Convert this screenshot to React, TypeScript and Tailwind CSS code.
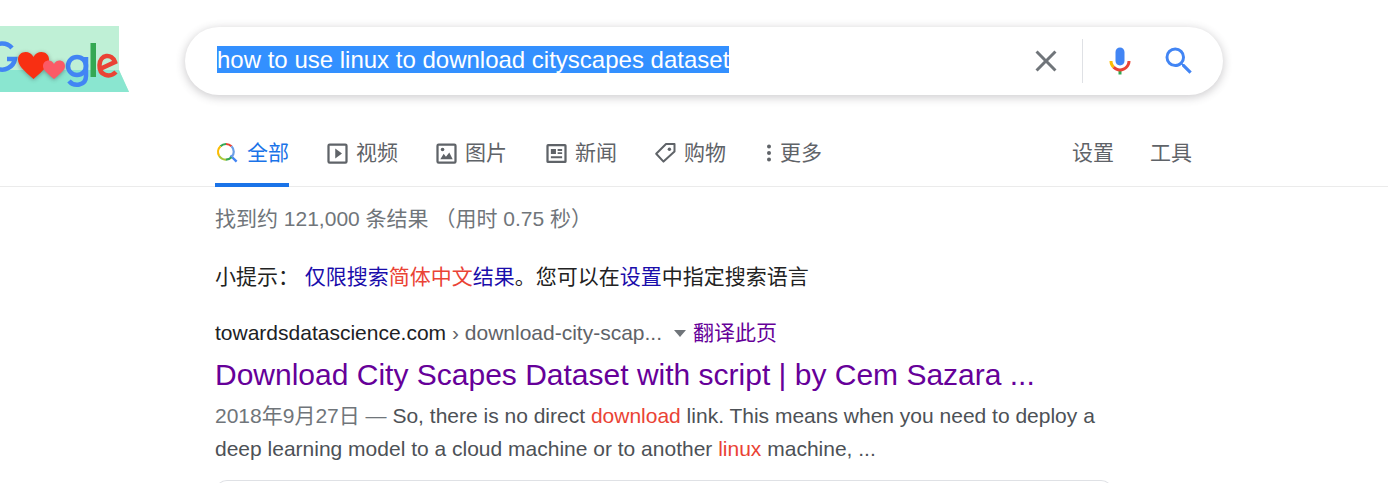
const cjk = "font-['Liberation_Sans','Noto_Sans_CJK_SC',sans-serif]";

function Logo() {
  return (
    <svg width="129" height="68" viewBox="0 0 129 68" className="block shrink-0">
      <polygon points="0,0 119,0 119,44 129,66 0,66" fill="#bff0d6" />
      <polygon points="0,44 119,44 129,66 0,66" fill="#8ae6d0" />
      <g style={{ filter: "blur(0.6px)" }}>
        <path d="M12 22 A13 13 0 1 0 15 33 L7 33" fill="none" stroke="#4285f4" strokeWidth="4.5" />
        <path d="M66 39.5 a0 0 0 0 0 0 0" fill="none" />
        <circle cx="77" cy="40" r="9" fill="none" stroke="#4285f4" strokeWidth="4.5" />
        <path d="M86 31 L86 50 C86 60 74 61 69 55" fill="none" stroke="#4285f4" strokeWidth="4.5" />
        <rect x="90.5" y="17" width="5.5" height="34" fill="#34a853" />
        <path d="M100 43 L115 36 C112 27 100 28 99.5 39 C99 50 110 52 116 46" fill="none" stroke="#ea4335" strokeWidth="4.5" />
      </g>
      <g style={{ filter: "drop-shadow(0 1px 2px rgba(60,60,60,0.45))" }}>
        <path d="M33.5 53 C23 44 18 39 18 33.5 C18 25 29.5 23 33.5 31 C37.5 23 49 25 49 33.5 C49 39 44 44 33.5 53 Z" fill="#f82f12" />
        <path d="M54 53 C47 47 43 44 43 40 C43 34 51 32 54 38 C57 32 65 34 65 40 C65 44 61 47 54 53 Z" fill="#fb5a66" />
      </g>
    </svg>
  );
}

function SearchBar() {
  return (
    <div className="ml-[56px] flex h-[68px] w-[1038px] items-center rounded-[34px] bg-white pl-[32px] shadow-[0_2px_8px_1px_rgba(64,60,67,0.24)]">
      <div className="flex-1 pb-[2px]">
        <span className={`inline-block bg-[#3390ff] text-[24px] leading-[27px] text-white ${cjk}`}>how to use linux to download cityscapes dataset</span>
      </div>
      <svg width="36" height="36" viewBox="0 0 24 24" className="shrink-0">
        <path d="M19 6.41 17.59 5 12 10.59 6.41 5 5 6.41 10.59 12 5 17.59 6.41 19 12 13.41 17.59 19 19 17.59 13.41 12z" fill="#70757a" />
      </svg>
      <div className="ml-[18px] h-[44px] w-px bg-[#dfe1e5]" />
      <svg width="36" height="36" viewBox="0 0 24 24" className="ml-[19px] shrink-0">
        <path d="M12 15c1.66 0 3-1.31 3-2.97V5.97C15 4.31 13.66 3 12 3S9 4.31 9 5.97v6.06c0 1.66 1.34 2.97 3 2.97z" fill="#4285f4" />
        <path d="M11 18.08h2V21h-2z" fill="#34a853" />
        <path d="M7.05 16.87c-1.27-1.33-2.05-2.83-2.05-4.87h2c0 1.45.56 2.42 1.47 3.38l-1.42 1.49z" fill="#fbbc05" />
        <path d="M12 16.93c-1.45 0-2.59-.47-3.53-1.55l-1.42 1.49C8.3 18.2 9.95 19 12 19s3.7-.8 4.95-2.13c1.27-1.33 2.05-2.83 2.05-4.87h-2c0 2.76-2.24 4.93-5 4.93z" fill="#ea4335" />
      </svg>
      <svg width="36" height="36" viewBox="0 0 24 24" className="ml-[23px] mr-[26px] shrink-0">
        <path d="M15.5 14h-.79l-.28-.27A6.47 6.47 0 0 0 16 9.5 6.5 6.5 0 1 0 9.5 16c1.61 0 3.09-.59 4.23-1.57l.27.28v.79l5 4.99L20.49 19l-4.99-5zm-6 0C7.01 14 5 11.99 5 9.5S7.01 5 9.5 5 14 7.01 14 9.5 11.99 14 9.5 14z" fill="#4285f4" />
      </svg>
    </div>
  );
}

function IconBox({ children }: { children: React.ReactNode }) {
  return (
    <svg width="27" height="27" viewBox="0 0 24 24" fill="#5f6368" className="shrink-0">
      {children}
    </svg>
  );
}

function Tab({ icon, label, gap = "ml-[5px]", width }: { icon: React.ReactNode; label: string; gap?: string; width: string }) {
  return (
    <div className={`flex h-[59px] items-center pb-[9px] ${width}`}>
      {icon}
      <span className={`${gap} text-[21px] leading-[32px] text-[#5f6368] ${cjk}`}>{label}</span>
    </div>
  );
}

function Tabs() {
  return (
    <div className="mt-[33px] flex h-[59px] border-b border-[#ebebeb] pl-[215px]">
      <div className="flex h-[59px] w-[74px] items-center border-b-[4px] border-[#1a73e8] pb-[5px]">
        <svg width="24" height="24" viewBox="0 0 24 24" className="shrink-0">
          <path d="M15.5 14.5 21.6 20.6" stroke="#4285f4" strokeWidth="2.4" fill="none" />
          <path d="M11 3A7.8 7.8 0 0 1 16.5 5.3" stroke="#ea4335" strokeWidth="2.2" fill="none" />
          <path d="M5.5 5.3A7.8 7.8 0 0 1 11 3" stroke="#34a853" strokeWidth="2.2" fill="none" />
          <path d="M5.5 5.3A7.8 7.8 0 0 0 4.2 15" stroke="#fbbc05" strokeWidth="2.2" fill="none" />
          <path d="M4.2 15A7.8 7.8 0 0 0 11 18.6" stroke="#a8c63a" strokeWidth="2.2" fill="none" />
          <path d="M11 18.6A7.8 7.8 0 0 0 16.5 5.3" stroke="#4f90ea" strokeWidth="2.2" fill="none" opacity="0.0" />
          <path d="M16.5 5.3A7.8 7.8 0 0 1 16.5 16.3" stroke="#6c9fe6" strokeWidth="2.2" fill="none" />
          <path d="M11 18.6A7.8 7.8 0 0 0 16.5 16.3" stroke="#34a853" strokeWidth="2.2" fill="none" />
        </svg>
        <span className={`ml-[8px] text-[21px] leading-[32px] text-[#1a73e8] ${cjk}`}>全部</span>
      </div>
      <div className="ml-[35px]">
        <Tab
          width="w-[109px]"
          label="视频"
          icon={
            <IconBox>
              <path d="M10 16.5l6-4.5-6-4.5v9z" />
              <path d="M3 5a2 2 0 0 1 2-2h14a2 2 0 0 1 2 2v14a2 2 0 0 1-2 2H5a2 2 0 0 1-2-2V5zm2 0v14h14V5H5z" fillRule="evenodd" />
            </IconBox>
          }
        />
      </div>
      <Tab
        width="w-[110px]"
        label="图片"
        icon={
          <IconBox>
            <path d="M19 3H5a2 2 0 0 0-2 2v14a2 2 0 0 0 2 2h14a2 2 0 0 0 2-2V5a2 2 0 0 0-2-2zm0 16H5V5h14v14z" />
            <path d="M14.5 11l-3 3.9-2-2.6L6.5 17h11z" />
            <circle cx="8.5" cy="8.5" r="1.6" />
          </IconBox>
        }
      />
      <Tab
        width="w-[110px]"
        label="新闻"
        icon={
          <IconBox>
            <path d="M19.5 3.5h-15A1.5 1.5 0 0 0 3 5v14a1.5 1.5 0 0 0 1.5 1.5h15A1.5 1.5 0 0 0 21 19V5a1.5 1.5 0 0 0-1.5-1.5zM19 18.5H5v-13h14v13z" />
            <path d="M7 8h4.5v4.5H7zM7 14.5h10v1.7H7zM13 8h4v1.7h-4zM13 10.8h4v1.7h-4z" />
          </IconBox>
        }
      />
      <div className="flex h-[59px] w-[113px] items-center pb-[9px]">
        <svg width="24" height="24" viewBox="0 0 24 24" className="shrink-0">
          <path d="M21.5 3 13 3 3.2 12.8 10.5 20.6 21.5 10.5Z" fill="none" stroke="#5f6368" strokeWidth="2" strokeLinejoin="round" />
          <circle cx="16.4" cy="8.2" r="1.7" fill="#5f6368" />
        </svg>
        <span className={`ml-[7px] text-[21px] leading-[32px] text-[#5f6368] ${cjk}`}>购物</span>
      </div>
      <div className="flex h-[59px] items-center pb-[9px]">
        <svg width="6" height="18" viewBox="0 0 6 18" fill="#5f6368" className="shrink-0">
          <circle cx="3" cy="2.5" r="2" />
          <circle cx="3" cy="9" r="2" />
          <circle cx="3" cy="15.5" r="2" />
        </svg>
        <span className={`ml-[8px] text-[21px] leading-[32px] text-[#5f6368] ${cjk}`}>更多</span>
      </div>
      <div className={`ml-auto mr-[196px] flex h-[59px] items-center gap-[36px] pb-[10px] text-[21px] leading-[32px] text-[#5f6368] ${cjk}`}>
        <span>设置</span>
        <span>工具</span>
      </div>
    </div>
  );
}

function Results() {
  return (
    <div className={`pl-[215px] ${cjk}`}>
      <div className="mt-[16px] text-[21px] leading-[32px] text-[#70757a]">找到约 121,000 条结果 （用时 0.75 秒）</div>
      <div className="mt-[26px] text-[21px] leading-[32px] text-[#222]">
        小提示： <span className="text-[#1a0dab]">仅限搜索</span>
        <span className="text-[#ea4335]">简体中文</span>
        <span className="text-[#1a0dab]">结果</span>。您可以在<span className="text-[#1a0dab]">设置</span>中指定搜索语言
      </div>
      <div className="mt-[24px] flex items-center text-[21px] leading-[32px]">
        <span className="text-[#202124]">towardsdatascience.com</span>
        <span className="text-[#5f6368]">&nbsp;› download-city-scap...</span>
        <span className="ml-[12px] mt-[1px] h-0 w-0 border-x-[6px] border-t-[7px] border-x-transparent border-t-[#70757a]" />
        <span className="ml-[7px] text-[#660099]">翻译此页</span>
      </div>
      <div className="mt-[6px] text-[30px] leading-[39px] text-[#660099]">Download City Scapes Dataset with script | by Cem Sazara ...</div>
      <div className="mt-[5px] text-[21px] leading-[33px] text-[#4d5156]">
        <div>
          <span className="text-[#70757a]">2018年9月27日 — </span>So, there is no direct <span className="text-[#ea4335]">download</span> link. This means when you need to deploy a
        </div>
        <div>
          deep learning model to a cloud machine or to another <span className="text-[#ea4335]">linux</span> machine, ...
        </div>
      </div>
      <div className="mt-[15px] h-[12px] w-[898px] rounded-t-[12px] border border-b-0 border-[#dfe1e5]" />
    </div>
  );
}

export default function App() {
  return (
    <div className="h-[483px] w-full overflow-hidden bg-white">
      <div className="flex items-start pt-[26px]">
        <Logo />
        <div className="mt-px">
          <SearchBar />
        </div>
      </div>
      <Tabs />
      <Results />
    </div>
  );
}
